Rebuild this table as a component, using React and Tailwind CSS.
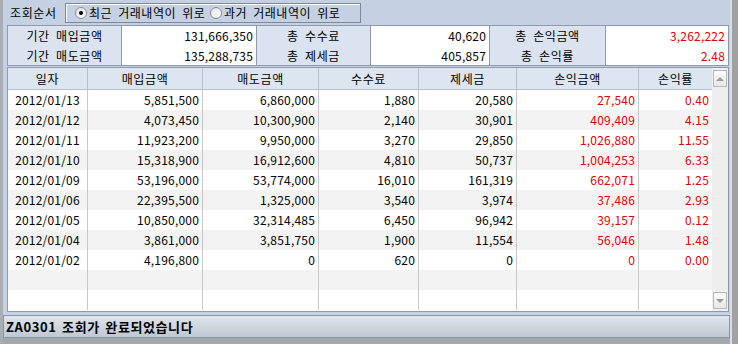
import React from "react";

const F = { fontFamily: '"Noto Sans CJK KR", "Noto Sans", sans-serif' };

const rows = [
  ["2012/01/13", "5,851,500", "6,860,000", "1,880", "20,580", "27,540", "0.40"],
  ["2012/01/12", "4,073,450", "10,300,900", "2,140", "30,901", "409,409", "4.15"],
  ["2012/01/11", "11,923,200", "9,950,000", "3,270", "29,850", "1,026,880", "11.55"],
  ["2012/01/10", "15,318,900", "16,912,600", "4,810", "50,737", "1,004,253", "6.33"],
  ["2012/01/09", "53,196,000", "53,774,000", "16,010", "161,319", "662,071", "1.25"],
  ["2012/01/06", "22,395,500", "1,325,000", "3,540", "3,974", "37,486", "2.93"],
  ["2012/01/05", "10,850,000", "32,314,485", "6,450", "96,942", "39,157", "0.12"],
  ["2012/01/04", "3,861,000", "3,851,750", "1,900", "11,554", "56,046", "1.48"],
  ["2012/01/02", "4,196,800", "0", "620", "0", "0", "0.00"],
  null,
  null,
];

const headers = ["일자", "매입금액", "매도금액", "수수료", "제세금", "손익금액", "손익률"];
const widths = ["w-[80px]", "w-[115px]", "w-[116px]", "w-[100px]", "w-[98px]", "w-[122px]", "w-[73px]"];

function Radio({ checked, label }) {
  return (
    <div className="flex items-center gap-[2px]">
      <div className="w-[12px] h-[12px] rounded-full border border-[#8a8f96] bg-gradient-to-br from-[#e2e4e8] to-white flex items-center justify-center">
        {checked && <div className="w-[4px] h-[4px] rounded-full bg-black" />}
      </div>
      <span className="w-[120px] whitespace-nowrap text-[12px] text-black leading-none tracking-[0.5px] [word-spacing:3px]">{label}</span>
    </div>
  );
}

export default function App() {
  return (
    <div style={F} className="w-[738px] h-[344px] flex bg-[#a4a8ae] overflow-hidden">
      <div className="w-[3px] shrink-0 bg-[#a9aeb5]" />
      <div className="w-[727px] shrink-0 flex flex-col bg-[#c5d1e2]">
        {/* top row */}
        <div className="h-[25px] flex items-center">
          <span className="ml-[7px] text-[12px] text-black w-[55px] tracking-[0.6px]">조회순서</span>
          <div className="h-[20px] w-[296px] border border-[#7e8897] flex items-center pl-[9px] gap-[1px] shadow-[inset_1px_1px_0_#ffffff]">
            <Radio checked label="최근 거래내역이 위로" />
            <Radio label="과거 거래내역이 위로" />
          </div>
        </div>
        {/* summary */}
        <div className="ml-[4px] w-[722px] h-[41px] border border-[#8f9bad] flex text-[12px] text-black">
          <div className="w-[114px] bg-[#dae3ef] flex flex-col border-r border-[#8f9bad] tracking-[0.6px] [word-spacing:3px]">
            <div className="h-[20px] flex items-center justify-center">기간 매입금액</div>
            <div className="h-[19px] flex items-center justify-center">기간 매도금액</div>
          </div>
          <div className="w-[135px] bg-white flex flex-col items-end pr-[3px] border-r border-[#8f9bad] tracking-[0.2px]">
            <div className="h-[20px] flex items-center">131,666,350</div>
            <div className="h-[19px] flex items-center">135,288,735</div>
          </div>
          <div className="w-[114px] bg-[#dae3ef] flex flex-col border-r border-[#8f9bad] tracking-[0.6px] [word-spacing:3px]">
            <div className="h-[20px] flex items-center justify-center">총 수수료</div>
            <div className="h-[19px] flex items-center justify-center">총 제세금</div>
          </div>
          <div className="w-[119px] bg-white flex flex-col items-end pr-[3px] border-r border-[#8f9bad] tracking-[0.2px]">
            <div className="h-[20px] flex items-center">40,620</div>
            <div className="h-[19px] flex items-center">405,857</div>
          </div>
          <div className="w-[116px] bg-[#dae3ef] flex flex-col border-r border-[#8f9bad] tracking-[0.6px] [word-spacing:3px]">
            <div className="h-[20px] flex items-center justify-center">총 손익금액</div>
            <div className="h-[19px] flex items-center justify-center">총 손익률</div>
          </div>
          <div className="flex-1 bg-white flex flex-col items-end pr-[3px] text-[#e00000] tracking-[0.2px]">
            <div className="h-[20px] flex items-center">3,262,222</div>
            <div className="h-[19px] flex items-center">2.48</div>
          </div>
        </div>
        {/* grid */}
        <div className="ml-[4px] mt-[1px] w-[722px] h-[245px] border border-[#8f9bad] flex text-[12px] text-black bg-white">
          <div className="flex flex-col w-[704px]">
            <div className="h-[22px] flex bg-[#dde5f1] border-b border-[#b4bfcf] tracking-[0.6px]">
              {headers.map((h, i) => (
                <div
                  key={h}
                  className={`${widths[i]} shrink-0 flex items-center justify-center ${i < 6 ? "border-r border-[#b4bfcf]" : ""}`}
                >
                  {h}
                </div>
              ))}
            </div>
            {rows.map((r, ri) => (
              <div key={ri} className={`h-[20px] flex tracking-[0.2px] ${ri % 2 === 1 ? "bg-[#f3f3f3]" : "bg-white"}`}>
                {widths.map((w, ci) => (
                  <div
                    key={ci}
                    className={`${w} shrink-0 flex items-center ${ci === 0 ? "justify-center" : "justify-end pr-[3px]"} ${ci < 6 ? "border-r border-[#c8c8c8]" : ""} ${ci >= 5 ? "text-[#e00000]" : ""}`}
                  >
                    {r ? r[ci] : ""}
                  </div>
                ))}
              </div>
            ))}
          </div>
          {/* scrollbar */}
          <div className="flex-1 bg-[#eeeeee] flex flex-col justify-between py-[2px] px-[1px]">
            <div className="h-[17px] border border-[#b8b8b8] bg-gradient-to-b from-[#fbfbfb] to-[#e6e6e6] flex items-center justify-center">
              <div className="w-0 h-0 border-l-[4px] border-r-[4px] border-b-[4px] border-l-transparent border-r-transparent border-b-[#9a9a9a]" />
            </div>
            <div className="h-[17px] border border-[#b8b8b8] bg-gradient-to-b from-[#fbfbfb] to-[#e6e6e6] flex items-center justify-center">
              <div className="w-0 h-0 border-l-[4px] border-r-[4px] border-t-[4px] border-l-transparent border-r-transparent border-t-[#9a9a9a]" />
            </div>
          </div>
        </div>
        {/* status */}
        <div className="mt-[3px] h-[23px] border border-[#8a94a2] bg-gradient-to-b from-[#dfe5ec] to-[#bfc8d3] flex items-center pl-[2px]">
          <span className="text-[13px] font-bold text-black tracking-[0.6px] [word-spacing:2px]">ZA0301 조회가 완료되었습니다</span>
        </div>
        <div className="flex-1 bg-[#a4a8ae]" />
      </div>
      <div className="w-[2px] shrink-0 bg-[#d8dee6]" />
      <div className="flex-1 bg-[#a1a1a1]" />
    </div>
  );
}
